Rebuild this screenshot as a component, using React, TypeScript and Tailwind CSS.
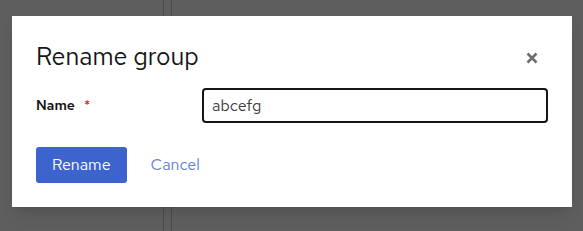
import { useEffect, useRef, useState } from "react";

const FONT = "font-['Red_Hat_Text','Noto_Sans',sans-serif]";

function CloseIcon() {
  return (
    <svg viewBox="0 0 12 12" className="h-[12px] w-[12px]" aria-hidden>
      <path d="M1.5 1.5 L10.5 10.5 M10.5 1.5 L1.5 10.5" stroke="#6a6e73" strokeWidth="2.6" strokeLinecap="butt" />
    </svg>
  );
}

export default function App() {
  const [name, setName] = useState("abcefg");
  const inputRef = useRef<HTMLInputElement>(null);

  // focused field with the caret after the text, like the open dialog
  useEffect(() => {
    const el = inputRef.current;
    if (!el) return;
    el.focus();
    el.setSelectionRange(el.value.length, el.value.length);
  }, []);

  return (
    <div className={`relative h-[231px] w-[583px] overflow-hidden bg-[#5e5e5e] ${FONT}`}>
      {/* page behind the backdrop — two thin column rules */}
      <div className="flex h-full">
        <div className="w-[163px]" />
        <div className="w-px bg-[#4c4c4c]" />
        <div className="w-[7px]" />
        <div className="w-px bg-[#4c4c4c]" />
      </div>

      {/* modal */}
      <div className="absolute left-[12px] top-[16px] w-[560px] bg-white px-6 pt-6 pb-6 shadow-lg">
        <div className="flex items-start justify-between">
          <h1 className="pt-[2px] text-[25px] leading-[30px] font-normal text-[#151515]">Rename group</h1>
          <button type="button" aria-label="Close" className="mt-[12px] mr-[10px] flex h-[12px] w-[12px] items-center justify-center">
            <CloseIcon />
          </button>
        </div>

        <form className="mt-[16px] grid grid-cols-[150px_1fr] items-center gap-x-4">
          <label className="text-[14px] font-semibold text-[#151515]">
            Name <span className="ml-[6px] font-normal text-[#c9190b]">*</span>
          </label>
          <input
            ref={inputRef}
            value={name}
            onChange={(e) => setName(e.target.value)}
            className="h-[35px] w-full rounded-[4px] border-2 border-[#151515] px-[8px] text-[16px] text-[#3c3c3c] caret-[#151515] outline-none"
          />
        </form>

        <div className="mt-6 flex items-center gap-6">
          <button type="button" className="h-[36px] rounded-[3px] bg-[#3d63cf] px-4 text-[16px] text-white">
            Rename
          </button>
          <button type="button" className="text-[16px] text-[#5f82dc]">
            Cancel
          </button>
        </div>
      </div>
    </div>
  );
}
